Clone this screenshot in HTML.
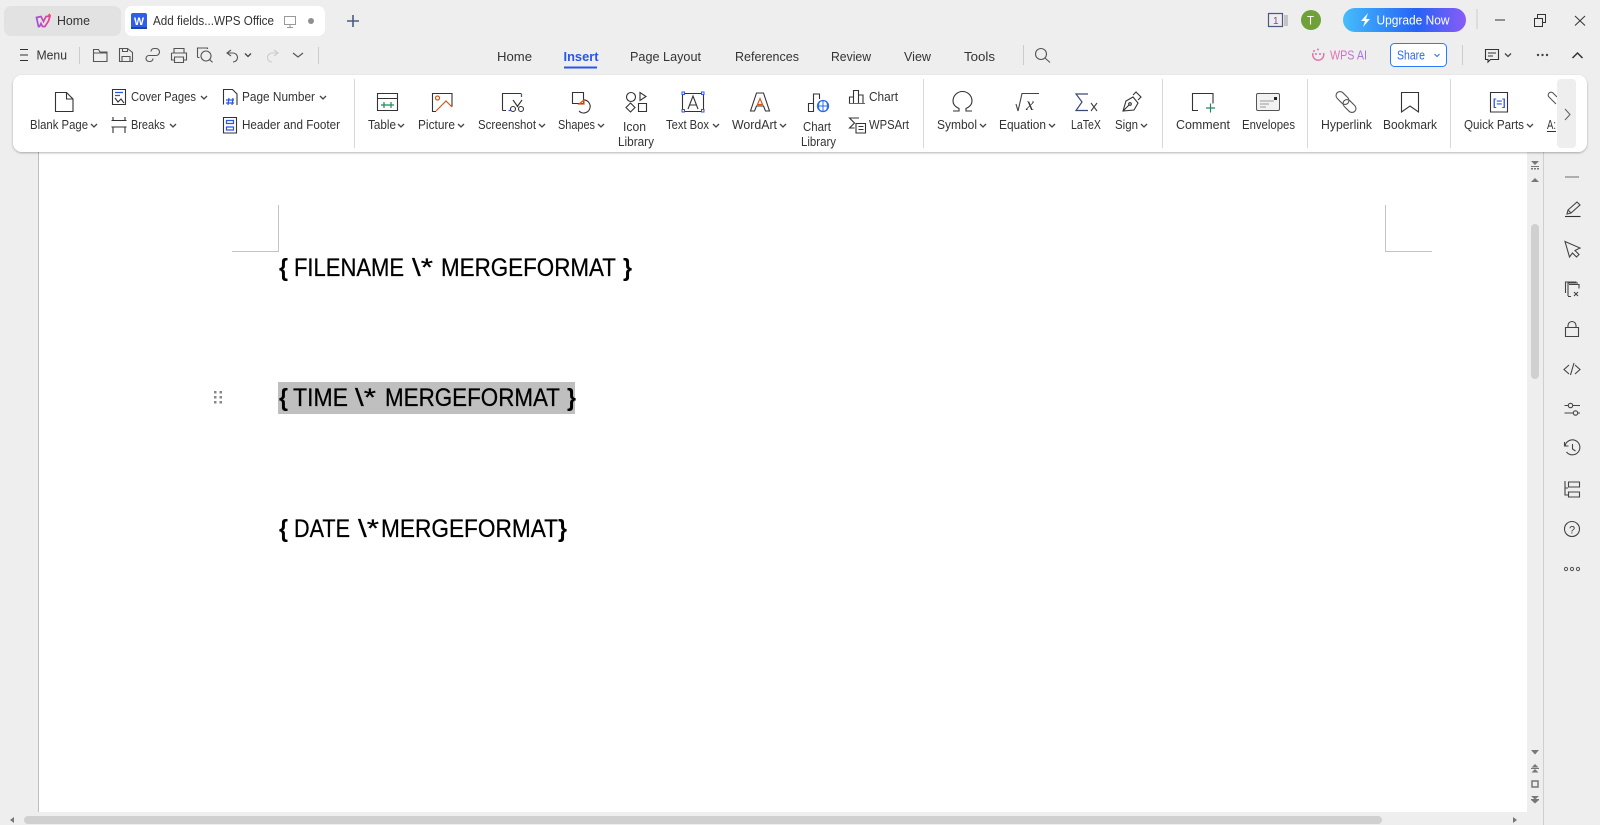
<!DOCTYPE html>
<html><head><meta charset="utf-8"><title>WPS Office</title>
<style>
html,body{margin:0;padding:0;width:1600px;height:825px;overflow:hidden;background:#eee}
svg{display:block}
text{font-family:"Liberation Sans",sans-serif;font-size:12.5px;fill:#333}
.tb{font-size:13px;fill:#333}
.d{font-size:25px;fill:#000;stroke:#000;stroke-width:.25}
.b{font-size:25px;fill:#000;font-weight:bold}
.i{fill:none;stroke:#333;stroke-width:1.1}
.g{fill:none;stroke:#555;stroke-width:1.1}
.bl{fill:none;stroke:#2b55e8;stroke-width:1.2}
.or{fill:none;stroke:#d4571c;stroke-width:1.2}
</style></head><body>
<svg width="1600" height="825" viewBox="0 0 1600 825" xmlns="http://www.w3.org/2000/svg">
<defs>
<path id="c" d="M-3 -1.5L0 1.5L3 -1.5" fill="none" stroke="#444" stroke-width="1.3"/>
<linearGradient id="up" x1="0" x2="1" y1="0" y2="0"><stop offset="0" stop-color="#45bdfb"/><stop offset=".6" stop-color="#2563f5"/><stop offset="1" stop-color="#8a5cf6"/></linearGradient>
<linearGradient id="ai" x1="0" x2="1" y1="0" y2="0"><stop offset="0" stop-color="#ee6fa8"/><stop offset="1" stop-color="#9a78ea"/></linearGradient>
<linearGradient id="lg" x1="0" x2="1" y1="0" y2="0"><stop offset="0" stop-color="#a04fe0"/><stop offset="1" stop-color="#ee3f8f"/></linearGradient>
<filter id="sh" x="-2%" y="-10%" width="104%" height="120%"><feDropShadow dx="0" dy="1" stdDeviation="1" flood-color="#000" flood-opacity=".3"/></filter>
</defs>
<rect width="1600" height="825" fill="#eee"/>

<!-- document -->
<rect x="38" y="150" width="1" height="662" fill="#bdbdbd"/>
<rect x="39" y="150" width="1488" height="662" fill="#fff"/>
<rect x="1543" y="150" width="1" height="675" fill="#cfcfcf"/>
<rect x="1531" y="224" width="8" height="155" rx="4" fill="#d0d0d0"/>
<rect x="24" y="816" width="1358" height="8" rx="4" fill="#d0d0d0"/>
<path d="M10 820l4-3v6z" fill="#777"/><path d="M1517 820l-4-3v6z" fill="#777"/>
<g fill="#777">
<path d="M1531 161h8l-4 4z"/><rect x="1531" y="166" width="8" height="1"/><rect x="1531" y="168" width="2" height="1.5"/><rect x="1534" y="168" width="2" height="1.5"/><rect x="1537" y="168" width="2" height="1.5"/>
<path d="M1535 178l4 4h-8z"/>
<path d="M1531 750h8l-4 4.500z"/>
<path d="M1535 764l3.500 3.500h-7z"/><rect x="1531" y="768" width="8" height="1"/><path d="M1535 769l3.500 3.500h-7z"/>
<path d="M1532 781h6v6h-6z" fill="none" stroke="#777" stroke-width="1.500"/>
<path d="M1531 796h8l-4 3.500z"/><rect x="1531" y="799" width="8" height="1"/><path d="M1531 800h8l-4 3.500z"/>
</g>

<path d="M278.500 205V251.500H232M1385.500 205V251.500H1432" fill="none" stroke="#c4c4c4"/>
<rect x="278" y="382" width="297" height="32" fill="#bfbfbf"/>
<g fill="#888"><rect x="214" y="391" width="2.500" height="2.500"/><rect x="219.500" y="391" width="2.500" height="2.500"/><rect x="214" y="396" width="2.500" height="2.500"/><rect x="219.500" y="396" width="2.500" height="2.500"/><rect x="214" y="401" width="2.500" height="2.500"/><rect x="219.500" y="401" width="2.500" height="2.500"/></g>

<text class="b" x="279" y="276" textLength="9" lengthAdjust="spacingAndGlyphs">{</text>
<text class="d" x="294" y="276" textLength="110" lengthAdjust="spacingAndGlyphs">FILENAME</text>
<text class="d" x="412" y="276" textLength="21" lengthAdjust="spacingAndGlyphs">\*</text>
<text class="d" x="441" y="276" textLength="175" lengthAdjust="spacingAndGlyphs">MERGEFORMAT</text>
<text class="b" x="623" y="276" textLength="9" lengthAdjust="spacingAndGlyphs">}</text>

<text class="b" x="279" y="406" textLength="9" lengthAdjust="spacingAndGlyphs">{</text>
<text class="d" x="293" y="406" textLength="55" lengthAdjust="spacingAndGlyphs">TIME</text>
<text class="d" x="355" y="406" textLength="21" lengthAdjust="spacingAndGlyphs">\*</text>
<text class="d" x="385" y="406" textLength="175" lengthAdjust="spacingAndGlyphs">MERGEFORMAT</text>
<text class="b" x="567" y="406" textLength="9" lengthAdjust="spacingAndGlyphs">}</text>

<text class="b" x="279" y="537" textLength="9" lengthAdjust="spacingAndGlyphs">{</text>
<text class="d" x="294" y="537" textLength="56" lengthAdjust="spacingAndGlyphs">DATE</text>
<text class="d" x="358" y="537" textLength="21" lengthAdjust="spacingAndGlyphs">\*</text>
<text class="d" x="381" y="537" textLength="177" lengthAdjust="spacingAndGlyphs">MERGEFORMAT</text>
<text class="b" x="558" y="537" textLength="9" lengthAdjust="spacingAndGlyphs">}</text>

<!-- tab bar -->
<rect x="4" y="6" width="117" height="30" rx="7" fill="#e2e2e2"/>
<rect x="125" y="6" width="200" height="30" rx="7" fill="#fff"/>
<path d="M36.500 17.500l4.500-1 2.500 5 2.500-5 4-.5-1.500 5-3.500 5.500h-2.500l-1.500-3-1.500 3h-1z" fill="none" stroke="url(#lg)" stroke-width="1.700"/>
<path d="M48.500 15.500l1.500-1.500" stroke="#e8554f" stroke-width="1.600"/>
<text class="tb" x="57" y="25" textLength="33" lengthAdjust="spacingAndGlyphs">Home</text>
<rect x="131" y="13" width="16" height="16" rx="2" fill="#2f5fe6"/><rect x="131" y="27" width="16" height="2" fill="#1d3fb0"/>
<text x="134" y="25" style="font-size:11px;font-weight:bold;fill:#fff" textLength="10" lengthAdjust="spacingAndGlyphs">W</text>
<text class="tb" x="153" y="25" textLength="121" lengthAdjust="spacingAndGlyphs">Add fields...WPS Office</text>
<path d="M284.500 16.500h11v8h-11zM290 24.500v2.500M287 27.500h6" fill="none" stroke="#999"/>
<circle cx="311" cy="21" r="3" fill="#8f8f8f"/>
<path d="M347 21h12M353 15v12" stroke="#4b5b84" stroke-width="1.600" fill="none"/>

<!-- menu row -->
<path d="M20 49.500h8M20 55h8M20 60.500h8" stroke="#333" fill="none"/>
<text x="36.500" y="59.500" textLength="30.500" lengthAdjust="spacingAndGlyphs">Menu</text>
<rect x="79" y="47" width="1" height="17" fill="#ccc"/>
<g class="g">
<path d="M93.500 49.500h5l1.500 2.500h7v9.500h-13.500zM93.500 53h13.500"/>
<path d="M119.500 48.500h8l5 4v9h-13zM122.500 48.500v3h5v-3M122 61.500v-5h8v5"/>
<path d="M150 55.500h6a3 3 0 0 0 0-7h-2a3 3 0 0 0-3 3M152 55.500h-3a3 3 0 0 0 0 6h1a3 3 0 0 0 3-3"/>
<path d="M174 53v-4.500h10V53M171.500 53h15v7h-3M174.500 60h-3v-7M174.500 57h9v5.500h-9z"/>
<path d="M197.500 57.500v-9.500h10v1M197.500 57.500h2"/><circle cx="206" cy="56" r="5"/><path d="M209.500 59.500l3 2.800"/>
<path d="M231 50l-4 3 4 3M227 53h6a4.500 4.500 0 0 1 0 9"/>
</g>
<use href="#c" x="248" y="55"/>
<path d="M274 50l4 3-4 3M278 53h-6a4.500 4.500 0 0 0 0 9" fill="none" stroke="#ccc" stroke-width="1.100"/>
<path d="M293 53l5 4 5-4" fill="none" stroke="#555" stroke-width="1.200"/>
<rect x="318" y="47" width="1" height="17" fill="#ccc"/>

<!-- tabs -->
<text class="tb" x="497" y="61" textLength="35" lengthAdjust="spacingAndGlyphs">Home</text>
<text class="tb" x="563.500" y="61" textLength="35" lengthAdjust="spacingAndGlyphs" style="fill:#2b55e8;font-weight:bold">Insert</text>
<rect x="564" y="66.500" width="33" height="2" fill="#2b55e8"/>
<text class="tb" x="630" y="61" textLength="71" lengthAdjust="spacingAndGlyphs">Page Layout</text>
<text class="tb" x="735" y="61" textLength="64" lengthAdjust="spacingAndGlyphs">References</text>
<text class="tb" x="831" y="61" textLength="40" lengthAdjust="spacingAndGlyphs">Review</text>
<text class="tb" x="904" y="61" textLength="27" lengthAdjust="spacingAndGlyphs">View</text>
<text class="tb" x="964" y="61" textLength="31" lengthAdjust="spacingAndGlyphs">Tools</text>
<rect x="1023" y="45" width="1" height="20" fill="#ccc"/>
<circle cx="1041" cy="54" r="5.500" class="g"/><path d="M1045 58l5 4.500" class="g"/>

<!-- top right -->
<path d="M1268.500 13.500h14v13h-14z" fill="none" stroke="#4a5a80" stroke-width="1.200"/>
<text x="1273" y="24" style="font-size:10px;fill:#7a4aa0">1</text>
<path d="M1285 15v11M1287 15v11" stroke="#999" fill="none"/>
<circle cx="1311" cy="20" r="10" fill="#6fa03a"/>
<text x="1307" y="24.500" style="font-size:11.500px;fill:#fff">T</text>
<rect x="1343" y="8" width="123" height="24" rx="12" fill="url(#up)"/>
<path d="M1368 13l-7 8h4l-2 6 7-8h-4z" fill="#fff"/>
<text x="1376.500" y="24.500" style="font-size:13px;fill:#fff" textLength="73" lengthAdjust="spacingAndGlyphs">Upgrade Now</text>
<rect x="1476.500" y="9" width="1" height="20" fill="#ccc"/>
<path d="M1495 20h10" stroke="#333" fill="none"/>
<path d="M1534.500 18.500h8v8h-8zM1537.500 18v-3.500h8v8h-3" fill="none" stroke="#333"/>
<path d="M1575 16l10 9.500M1585 16l-10 9.500" stroke="#333" fill="none"/>

<!-- row 2 right -->
<path d="M1313 53a5.500 5.500 0 1 0 10.500 0" fill="none" stroke="#e86fa8" stroke-width="1.500"/>
<circle cx="1316" cy="54" r="1" fill="#e86fa8"/><circle cx="1320" cy="54" r="1" fill="#a878ea"/><circle cx="1318" cy="49.500" r="1" fill="#e86fa8"/><circle cx="1314" cy="51" r="1" fill="#e86fa8"/>
<text x="1330" y="59.500" style="font-size:12.500px;fill:url(#ai)" textLength="37" lengthAdjust="spacingAndGlyphs">WPS AI</text>
<rect x="1390.500" y="43.500" width="56" height="23" rx="4" fill="#fff" stroke="#2a7bff"/>
<text x="1397" y="59.500" style="font-size:12.500px;fill:#2a6be8" textLength="28" lengthAdjust="spacingAndGlyphs">Share</text>
<path d="M1434.500 54l2.500 2.500 2.500-2.500" fill="none" stroke="#2a6be8"/>
<rect x="1462" y="45" width="1" height="20" fill="#ccc"/>
<path d="M1485.500 49.500h13v10h-8l-2.500 2.500v-2.500h-2.500zM1488 53h8M1488 56h5" fill="none" stroke="#333" stroke-width="1.100"/>
<use href="#c" x="1508" y="55"/>
<g fill="#444"><circle cx="1538" cy="55" r="1.200"/><circle cx="1542.500" cy="55" r="1.200"/><circle cx="1547" cy="55" r="1.200"/></g>
<path d="M1572.500 58l5-5 5 5" fill="none" stroke="#333" stroke-width="1.500"/>

<!-- ribbon -->
<rect x="13" y="75" width="1574" height="77" rx="9" fill="#fff" filter="url(#sh)"/>
<rect x="354" y="79" width="1" height="69" fill="#d8d8d8"/>
<rect x="923" y="79" width="1" height="69" fill="#d8d8d8"/>
<rect x="1162" y="79" width="1" height="69" fill="#d8d8d8"/>
<rect x="1307" y="79" width="1" height="69" fill="#d8d8d8"/>
<rect x="1450" y="79" width="1" height="69" fill="#d8d8d8"/>

<!-- ribbon icons -->
<path class="i" d="M55.500 92.500h11l6.500 6.500v12.500h-17.500zM66.500 92.500v6.500h6.500"/>
<path class="i" d="M112.500 89.500h13v15h-13zM115 98l3 4 3-3 3 4"/><path class="bl" d="M115 92.500h8M115 95.500h5"/>
<path class="i" d="M111.500 120.500h15M111.500 127h15M113 117v3.500M125 117v3.500M113 127v6M125 127v6"/>
<path class="i" d="M223.500 104.500v-15h9l4.500 4.500v11"/><path class="bl" d="M228 105l1-7M232 105l1-7M226 100h8M226 103h8"/>
<path class="i" d="M223.500 117.500h13v15.500h-13z"/><path class="bl" d="M226.500 120.500h7v3h-7zM226.500 127h7v3h-7z"/>

<path class="i" d="M377.500 93.500h20v17h-20zM377.500 98.500h20"/><path d="M381 105h13M384 102v6M391 102v6" fill="none" stroke="#1c8a5a" stroke-width="1.200"/>
<path class="i" d="M436 111.500h-3.500v-18h19.500v13"/><circle cx="437.500" cy="98" r="2" class="or"/><path class="or" d="M436 111l10-10 6 6"/>
<path class="i" d="M502.500 110.500v-17h19M506 110.500h-3.500"/><path class="bl" d="M521.500 94v3M508.500 110.500h2"/><path class="i" d="M513 100l5 7M522 100l-5 7"/><circle cx="513" cy="109" r="2.500" class="i"/><circle cx="521" cy="109" r="2.500" class="i"/>
<path class="i" d="M572.500 92.500h11v11h-11z"/><path class="i" d="M583 100a6.500 6.500 0 1 1-4 11"/><path class="or" d="M579 104l5-4v4z"/>
<circle cx="631" cy="97" r="4.500" class="i"/><path class="i" d="M640 92.500v8l6-4zM630.500 103l4.500 4.500-4.500 4.500-4.500-4.500zM638.500 103.500h8v8h-8z"/>
<path class="i" d="M682.500 93v18.500M703.500 93v18.500M684 93.500h18M684 111.500h18M688 109l5-13 5 13M690 105h6"/>
<g fill="#fff" stroke="#2b55e8"><rect x="682" y="92" width="2.500" height="2.500"/><rect x="701.500" y="92" width="2.500" height="2.500"/><rect x="682" y="109.500" width="2.500" height="2.500"/><rect x="701.500" y="109.500" width="2.500" height="2.500"/></g>
<path class="i" d="M750.500 111l6-18h7l6 18h-4l-2-5h-7l-2 5z"/><path class="or" d="M757.500 104.500l2.500-6 2.500 6z"/>
<path class="i" d="M808.500 103.500h5v8h-5zM813.500 111v-17h6v5"/><circle cx="823" cy="106" r="5.500" fill="none" stroke="#2b6be8" stroke-width="1.300"/><path d="M817.500 106h11M823 100.500v11M820 101a9 9 0 0 0 0 10M826 101a9 9 0 0 1 0 10" fill="none" stroke="#2b6be8"/>
<path class="i" d="M849.500 103v-6h4v6M853.500 97v-6.500h5V103M858.500 95h4.500v8"/><path d="M849 103.500h16" stroke="#1c8a5a" fill="none"/>
<path class="i" d="M859 118h-9.500l5 5-5 5h5M856 123.500h9.500v9.500h-9.500zM858.500 126.500h5M858.500 129.500h5"/>
<path class="i" d="M953 111h6v-2.500c-3.500-1.500-6-4-6-7.500a9.500 9.500 0 0 1 19 0c0 3.500-2.500 6-6 7.500v2.500h6" stroke-width="1.200"/>
<path d="M1016 104l2 7 4-17.500h17" fill="none" stroke="#444" stroke-width="1.100"/><text x="1026" y="110" style="font-size:18px;font-family:'Liberation Serif',serif;font-style:italic;fill:#333">x</text>
<path d="M1088 94h-12l6 8-6 8.500h12" fill="none" stroke="#3a4a70" stroke-width="1.200"/><path d="M1091 103l6 8M1097 103l-6 8" stroke="#444" fill="none" stroke-width="1.100"/>
<path class="i" d="M1123 111l3-10 7-4 5 6-4 7zM1123 111l6-6M1133 95l3-3 5 5-3 3"/><circle cx="1130" cy="104" r="1.300" class="i"/>
<path class="i" d="M1198 110.500h-5.500V93.500h20.500v10"/><path d="M1206 108h9M1210.500 103.500v9" stroke="#1c8a5a" stroke-width="1.200" fill="none"/>
<rect x="1256.500" y="93.500" width="23" height="17" rx="1.500" fill="#f2f2f2" stroke="#555"/><rect x="1274" y="97" width="3" height="3" fill="#222"/><path d="M1260 101h14M1260 104h9M1260 107h6" stroke="#999" fill="none"/>
<g class="g"><rect x="-7.500" y="-4" width="15" height="8" rx="4" transform="translate(1342.500 98) rotate(45)"/><rect x="-7.500" y="-4" width="15" height="8" rx="4" transform="translate(1349.500 106) rotate(45)"/></g>
<path class="i" d="M1401.500 92.500h17V112l-8.500-6-8.500 6z"/>
<path class="i" d="M1490.500 92.500h17v19.500h-17z"/><text x="1493" y="106" style="font-size:10px;fill:#2b55e8;font-weight:bold">[=]</text>
<path class="g" d="M1556 104l-7-7a2.500 2.500 0 0 1 4-4l4 4"/>

<!-- ribbon right button -->
<rect x="1557" y="79" width="19" height="69" rx="4" fill="#eee"/>
<path d="M1565 109l5 5.500-5 5.500" fill="none" stroke="#666" stroke-width="1.100"/>
<text x="1547" y="129" textLength="9" lengthAdjust="spacingAndGlyphs">A:</text><rect x="1547" y="131" width="9" height="1" fill="#333"/>

<!-- ribbon text -->
<text x="30" y="129" textLength="58" lengthAdjust="spacingAndGlyphs">Blank Page</text><use href="#c" x="94" y="125.500"/>
<text x="131" y="101" textLength="65" lengthAdjust="spacingAndGlyphs">Cover Pages</text><use href="#c" x="204" y="97.500"/>
<text x="131" y="129" textLength="34" lengthAdjust="spacingAndGlyphs">Breaks</text><use href="#c" x="173" y="125.500"/>
<text x="242" y="101" textLength="73" lengthAdjust="spacingAndGlyphs">Page Number</text><use href="#c" x="323" y="97.500"/>
<text x="242" y="129" textLength="98" lengthAdjust="spacingAndGlyphs">Header and Footer</text>
<text x="368" y="129" textLength="28" lengthAdjust="spacingAndGlyphs">Table</text><use href="#c" x="401" y="125.500"/>
<text x="418" y="129" textLength="37" lengthAdjust="spacingAndGlyphs">Picture</text><use href="#c" x="461" y="125.500"/>
<text x="478" y="129" textLength="58" lengthAdjust="spacingAndGlyphs">Screenshot</text><use href="#c" x="542" y="125.500"/>
<text x="558" y="129" textLength="37" lengthAdjust="spacingAndGlyphs">Shapes</text><use href="#c" x="601" y="125.500"/>
<text x="623" y="131" textLength="23" lengthAdjust="spacingAndGlyphs">Icon</text>
<text x="618" y="146" textLength="36" lengthAdjust="spacingAndGlyphs">Library</text>
<text x="666" y="129" textLength="43" lengthAdjust="spacingAndGlyphs">Text Box</text><use href="#c" x="716" y="125.500"/>
<text x="732" y="129" textLength="45" lengthAdjust="spacingAndGlyphs">WordArt</text><use href="#c" x="783" y="125.500"/>
<text x="803" y="131" textLength="28" lengthAdjust="spacingAndGlyphs">Chart</text>
<text x="801" y="146" textLength="35" lengthAdjust="spacingAndGlyphs">Library</text>
<text x="869" y="101" textLength="29" lengthAdjust="spacingAndGlyphs">Chart</text>
<text x="869" y="129" textLength="40" lengthAdjust="spacingAndGlyphs">WPSArt</text>
<text x="937" y="129" textLength="40" lengthAdjust="spacingAndGlyphs">Symbol</text><use href="#c" x="983" y="125.500"/>
<text x="999" y="129" textLength="47" lengthAdjust="spacingAndGlyphs">Equation</text><use href="#c" x="1052" y="125.500"/>
<text x="1071" y="129" textLength="30" lengthAdjust="spacingAndGlyphs">LaTeX</text>
<text x="1115" y="129" textLength="23" lengthAdjust="spacingAndGlyphs">Sign</text><use href="#c" x="1144" y="125.500"/>
<text x="1176" y="129" textLength="54" lengthAdjust="spacingAndGlyphs">Comment</text>
<text x="1242" y="129" textLength="53" lengthAdjust="spacingAndGlyphs">Envelopes</text>
<text x="1321" y="129" textLength="51" lengthAdjust="spacingAndGlyphs">Hyperlink</text>
<text x="1383" y="129" textLength="54" lengthAdjust="spacingAndGlyphs">Bookmark</text>
<text x="1464" y="129" textLength="60" lengthAdjust="spacingAndGlyphs">Quick Parts</text><use href="#c" x="1530" y="125.500"/>

<!-- side icons -->
<path d="M1565 177h14" stroke="#999" stroke-width="1.500" fill="none"/>
<g class="g" style="stroke:#444">
<path d="M1565 216.500h15.500" stroke="#333"/><path d="M1567 214l1-4 9-8 3 3-9 8zM1568 210l3 3"/>
<path d="M1565 241.500l15 6.500-5 2.500 4 4-2.500 2.500-4-4-3 4z"/>
<path d="M1568 296v-13h10M1565.500 293v-11h11M1571 296.500h-3M1569 284.500h10v4M1574 292l4 4M1578 292l-4 4"/>
<path d="M1565.500 327.500h13v9h-13zM1568 327.500v-2a4 4 0 0 1 8 0v2"/>
<path d="M1569 365l-5 4.500 5 4.500M1575 365l5 4.500-5 4.500M1574 363l-3.500 12"/>
<path d="M1564.500 405.500h4M1573 405.500h7M1564.500 413h9M1578 413h2"/><circle cx="1570.500" cy="405.500" r="2.200"/><circle cx="1575.500" cy="413" r="2.200"/>
<path d="M1565 446a7.500 7.500 0 1 1 1.500 6M1564.500 442v4h4M1572.500 444v5l3 2"/>
<path d="M1565 481v14h3M1565 488h3M1568.500 482h11v5h-11zM1568.500 492h11v5h-11z"/>
<circle cx="1572" cy="529" r="7.500"/>
</g>
<text x="1569" y="533.500" style="font-size:11px;fill:#444">?</text>
<g fill="none" stroke="#555"><circle cx="1566" cy="569" r="1.600"/><circle cx="1572" cy="569" r="1.600"/><circle cx="1578" cy="569" r="1.600"/></g>
</svg>
</body></html>
